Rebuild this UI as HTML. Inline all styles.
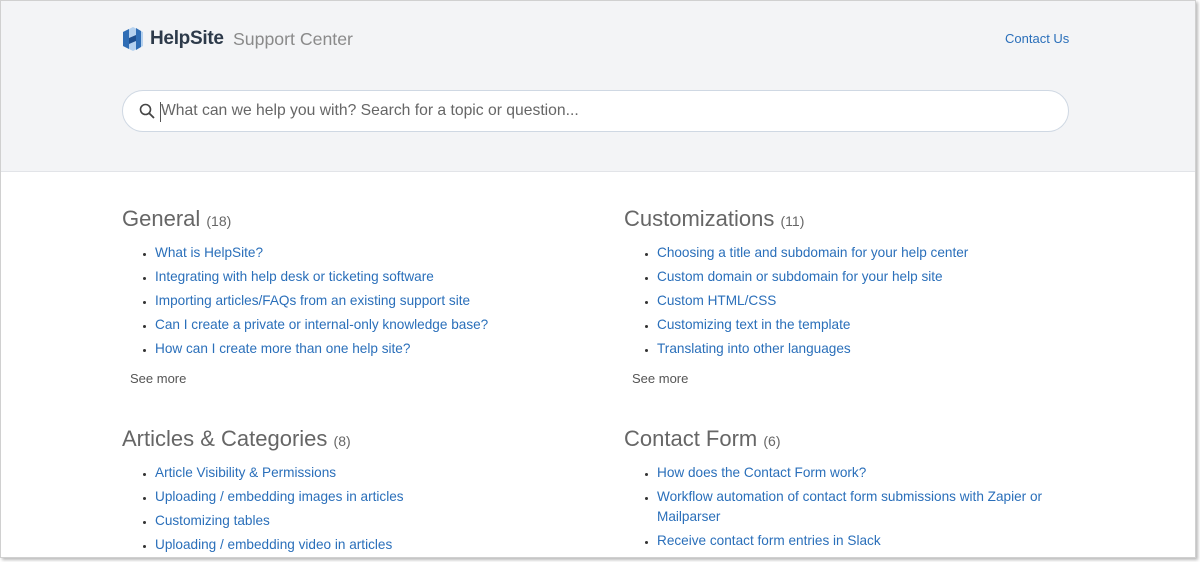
<!DOCTYPE html>
<html><head><style>
*{margin:0;padding:0;box-sizing:border-box}
body{width:1200px;height:562px;background:#fff;font-family:"Liberation Sans",sans-serif;overflow:hidden;position:relative}
.frame{position:absolute;left:0;top:0;width:1196px;height:558px;border:1px solid #d0d0d0;box-shadow:2px 2px 3px #bbb;overflow:hidden;background:#fff}
.hdr{position:absolute;left:0;top:0;width:100%;height:171px;background:#f3f4f6;border-bottom:1px solid #e2e4e8}
.logo{position:absolute;left:120px;top:26px}
.brand{position:absolute;left:149px;top:27px;font-size:19px;color:#2d3a4a;font-weight:bold;letter-spacing:-0.3px}
.sub{position:absolute;left:232px;top:28px;font-size:17.7px;color:#8a8a8a}
.contact{position:absolute;left:1004px;top:30px;font-size:13px;color:#2a6fba}
.search{position:absolute;left:121px;top:89px;width:947px;height:42px;border:1px solid #cfd8e3;border-radius:21px;background:#fff}
.search svg{position:absolute;left:16px;top:12px}
.search .cur{position:absolute;left:37px;top:11px;width:1px;height:20px;background:#555}
.search span{position:absolute;left:38px;top:11px;font-size:15.7px;color:#666}
.col{position:absolute;width:460px}
h2{font-weight:normal;font-size:22px;color:#666}
h2 small{font-size:14px;color:#666}
ul{margin-top:11px;margin-left:33px;list-style:disc;color:#2a6fba}
li{font-size:13.6px;line-height:20px;margin-bottom:4px;color:#2a6fba}
li::marker{color:#333;font-size:10px}
.more{font-size:13px;color:#555;margin:12px 0 0 8px}
</style></head><body><div class="frame">
<div class="hdr">
<svg class="logo" width="24" height="24" viewBox="0 0 24 24"><polygon points="12,0 22,5 22,19 12,24 2,19 2,5" fill="#b5d1ef"/><polygon points="2,5 8,2 8,22 2,19" fill="#2f6db5"/><polygon points="15,1 20,4 20,20 15,23" fill="#2f6db5"/><polygon points="8,11 15,8 15,14 8,17" fill="#1e4f8f"/></svg>
<div class="brand">HelpSite</div>
<div class="sub">Support Center</div>
<div class="contact">Contact Us</div>
<div class="search"><svg width="16" height="16" viewBox="0 0 16 16"><circle cx="6.5" cy="6.5" r="5" fill="none" stroke="#444" stroke-width="1.6"/><line x1="10.2" y1="10.2" x2="15" y2="15" stroke="#444" stroke-width="1.8"/></svg><div class="cur"></div><span>What can we help you with? Search for a topic or question...</span></div>
</div>
<div class="col" style="left:121px;top:205px"><h2>General <small>(18)</small></h2><ul>
<li>What is HelpSite?</li><li>Integrating with help desk or ticketing software</li><li>Importing articles/FAQs from an existing support site</li><li>Can I create a private or internal-only knowledge base?</li><li>How can I create more than one help site?</li></ul><div class="more">See more</div></div>
<div class="col" style="left:623px;top:205px"><h2>Customizations <small>(11)</small></h2><ul>
<li>Choosing a title and subdomain for your help center</li><li>Custom domain or subdomain for your help site</li><li>Custom HTML/CSS</li><li>Customizing text in the template</li><li>Translating into other languages</li></ul><div class="more">See more</div></div>
<div class="col" style="left:121px;top:425px"><h2>Articles &amp; Categories <small>(8)</small></h2><ul>
<li>Article Visibility &amp; Permissions</li><li>Uploading / embedding images in articles</li><li>Customizing tables</li><li>Uploading / embedding video in articles</li></ul></div>
<div class="col" style="left:623px;top:425px;width:440px"><h2>Contact Form <small>(6)</small></h2><ul>
<li>How does the Contact Form work?</li><li>Workflow automation of contact form submissions with Zapier or Mailparser</li><li>Receive contact form entries in Slack</li></ul></div>
</div></body></html>
